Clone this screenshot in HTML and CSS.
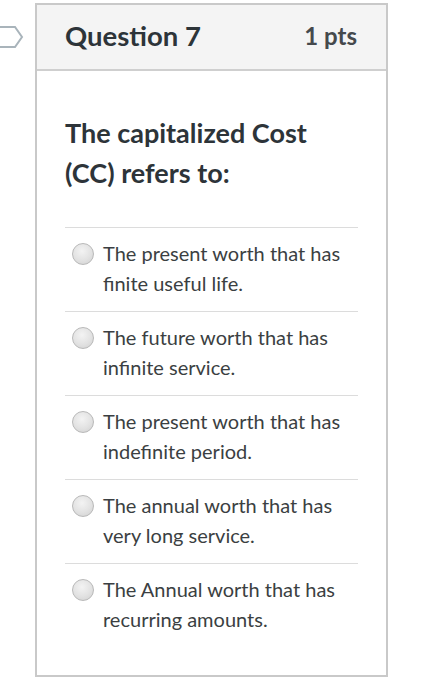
FILE: index.html
```html
<!DOCTYPE html>
<html>
<head>
<meta charset="utf-8">
<link rel="stylesheet" href="styles.css">
</head>
<body>
<div class="page">
  <div class="tag"><svg width="24" height="26" viewBox="0 0 24 26"><path d="M-2 3 H15 L22 13 L15 23 H-2" fill="#fff" stroke="#a9b4bb" stroke-width="2"/></svg></div>
  <div class="card">
    <div class="card-header">
      <span class="q-title">Question 7</span>
      <span class="q-pts">1 pts</span>
    </div>
    <div class="card-body">
      <div class="q-text">The capitalized Cost<br>(CC) refers to:</div>
      <div class="answers">
        <div class="answer"><span class="radio"></span><span class="a-text">The present worth that has<br>finite useful life.</span></div>
        <div class="answer"><span class="radio"></span><span class="a-text">The future worth that has<br>infinite service.</span></div>
        <div class="answer"><span class="radio"></span><span class="a-text">The present worth that has<br>indefinite period.</span></div>
        <div class="answer"><span class="radio"></span><span class="a-text">The annual worth that has<br>very long service.</span></div>
        <div class="answer"><span class="radio"></span><span class="a-text">The Annual worth that has<br>recurring amounts.</span></div>
      </div>
    </div>
  </div>
</div>
</body>
</html>
```

FILE: styles.css
```css
html, body {
  margin: 0;
  padding: 0;
  background: #ffffff;
}
body {
  font-family: Lato, "Liberation Sans", sans-serif;
  width: 435px;
  height: 700px;
  overflow: hidden;
}
.page {
  display: flex;
  align-items: flex-start;
  padding-top: 3px;
}
.tag {
  width: 24px;
  margin-top: 21px;
  flex: none;
  line-height: 0;
}
.card {
  margin-left: 11px;
  width: 353px;
  height: 674px;
  box-sizing: border-box;
  border: 2px solid #c9c9c9;
  display: flex;
  flex-direction: column;
}
.card-header {
  height: 66px;
  box-sizing: border-box;
  background: #f4f4f4;
  border-bottom: 2px solid #cfcfcf;
  display: flex;
  align-items: center;
  justify-content: space-between;
  padding: 0 29px 4px 28px;
}
.q-title {
  font-weight: 700;
  font-size: 27.5px;
  color: #2d3439;
}
.q-pts {
  font-weight: 700;
  font-size: 24px;
  color: #45494c;
}
.card-body {
  padding: 42px 28px 0 28px;
}
.q-text {
  font-weight: 700;
  font-size: 27px;
  line-height: 40px;
  color: #2d3439;
  margin-bottom: 34px;
}
.answer {
  border-top: 1px solid #dcdcdc;
  display: flex;
  align-items: flex-start;
  padding: 10px 0 13px 7px;
}
.radio {
  flex: none;
  width: 20px;
  height: 20px;
  border-radius: 50%;
  border: 1px solid #b9b9b9;
  background: radial-gradient(circle at 45% 35%, #f3f3f3 0%, #e2e2e2 55%, #cfcfcf 100%);
  margin-top: 5px;
  margin-right: 9px;
}
.a-text {
  font-size: 20px;
  line-height: 30px;
  color: #3b3f42;
}
```
